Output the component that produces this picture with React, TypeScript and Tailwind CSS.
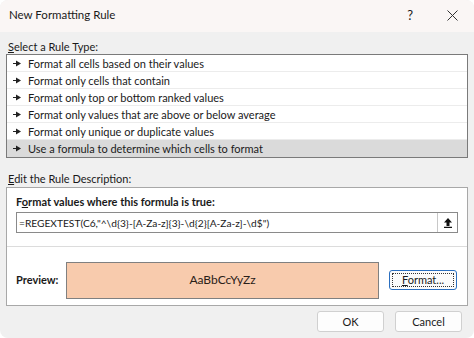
import React from "react";

const rules = [
  "Format all cells based on their values",
  "Format only cells that contain",
  "Format only top or bottom ranked values",
  "Format only values that are above or below average",
  "Format only unique or duplicate values",
  "Use a formula to determine which cells to format",
];

const formula = '=REGEXTEST(C6,"^\\d{3}-[A-Za-z]{3}-\\d{2}[A-Za-z]-\\d$")';

const Arrow = () => (
  <svg width="8" height="7" viewBox="0 0 8 7" className="shrink-0">
    <path d="M0 3.5H4" stroke="#222" strokeWidth="1.2" />
    <path d="M3 0.5L8 3.5L3 6.5Z" fill="#222" />
  </svg>
);

const App = () => {
  return (
    <div
      className="w-[474px] h-[338px] bg-white text-[#1a1a1a] text-[11px] leading-[14px]"
      style={{ fontFamily: 'Lato, "Noto Sans", sans-serif' }}
    >
      <div className="w-full h-full rounded-lg overflow-hidden bg-[#f0f0f0] flex flex-col">
        {/* title bar */}
        <div className="h-[32px] bg-[#faf6f5] flex items-center pl-[9px] pr-[16px] pb-[2px]">
          <span className="flex-1 text-[11.5px]">New Formatting Rule</span>
          <span className="mr-[34px] text-[13px]">?</span>
          <svg width="11" height="11" viewBox="0 0 11 11">
            <path d="M0.5 0.5L10.5 10.5M10.5 0.5L0.5 10.5" stroke="#333" strokeWidth="1" />
          </svg>
        </div>

        <div className="px-[6px] flex flex-col">
          <div className="h-[22px] pt-[8px] pl-[2px]">
            <span>
              <u>S</u>elect a Rule Type:
            </span>
          </div>

          <div className="border border-[#7a7a7a] bg-white flex flex-col">
            {rules.map((r, i) => (
              <div
                key={r}
                className={`h-[17px] flex items-center gap-[7px] pl-[6px] pt-[1px] border-b ${
                  i === rules.length - 1
                    ? "bg-[#dadada] border-transparent"
                    : "border-[#ececec]"
                }`}
              >
                <Arrow />
                <span>{r}</span>
              </div>
            ))}
          </div>

          <div className="h-[29px] pt-[14px] pl-[2px]">
            <span>
              <u>E</u>dit the Rule Description:
            </span>
          </div>

          <div className="border border-[#a8a8a8] bg-white flex flex-col h-[119px]">
            <div className="px-[9px] pt-[7px] pb-[13px] border-b border-[#dcdcdc]">
              <div className="font-bold h-[17px]">
                F<u>o</u>rmat values where this formula is true:
              </div>
              <div className="h-[21px] border border-[#8a8a8a] flex items-center">
                <span className="flex-1 pl-[2px] text-[10.2px]">{formula}</span>
                <div className="w-[20px] h-full border-l border-[#c8c8c8] flex items-center justify-center">
                  <svg width="10" height="11" viewBox="0 0 10 11">
                    <path d="M5 1L9 5.5H6.5V9H3.5V5.5H1Z" fill="#111" />
                    <path d="M1 10.3H9" stroke="#111" strokeWidth="1.2" />
                  </svg>
                </div>
              </div>
            </div>

            <div className="flex-1 flex items-center pl-[9px] pr-[10px] pt-[8px]">
              <span className="font-bold w-[50px]">Preview:</span>
              <div className="w-[313px] h-[37px] bg-[#f8cbad] border border-[#808080] flex items-center justify-center text-[12px] text-[#2a2018]">
                AaBbCcYyZz
              </div>
              <div className="ml-[10px] w-[68px] h-[20px] rounded-[3px] border border-[#2a6fc0] bg-[#fbfbfb] p-[2px]">
                <div className="w-full h-full border border-dotted border-[#333] flex items-center justify-center">
                  <span>
                    <u>F</u>ormat...
                  </span>
                </div>
              </div>
            </div>
          </div>

          <div className="flex justify-end gap-[11px] pt-[5px] pr-[6px]">
            <button className="w-[67px] h-[21px] rounded-[3px] border border-[#d0d0d0] bg-[#fdfdfd]">
              OK
            </button>
            <button className="w-[67px] h-[21px] rounded-[3px] border border-[#d0d0d0] bg-[#fdfdfd]">
              Cancel
            </button>
          </div>
        </div>
      </div>
    </div>
  );
};

export default App;
